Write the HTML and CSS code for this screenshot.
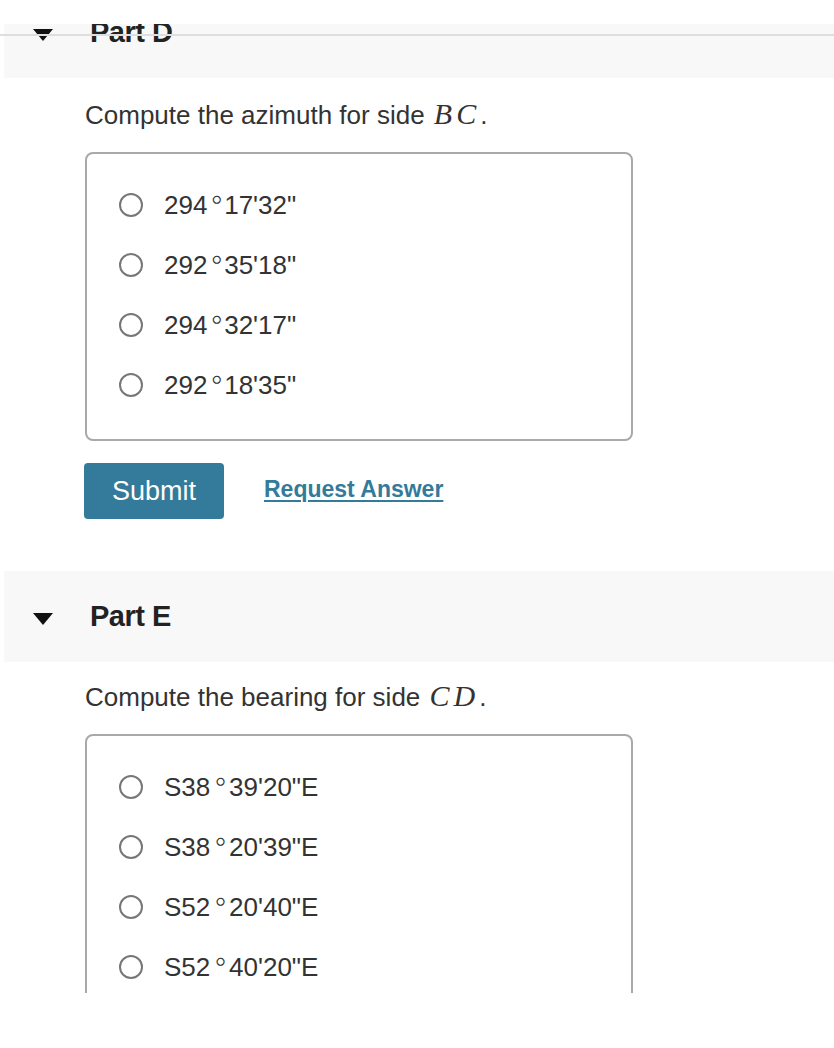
FILE: index.html
```html
<!DOCTYPE html>
<html lang="en">
<head>
    <meta charset="UTF-8">
    <meta name="viewport" content="width=device-width, initial-scale=1.0">
    <title>Parts D and E</title>
    <link rel="stylesheet" href="styles.css">
</head>
<body>
    <div class="top-rule"></div>
    <div class="viewport">
        <div class="content">
            <div class="part part-d">
                <div class="part-header">
                    <span class="arrow"></span>
                    <h3>Part D</h3>
                </div>
                <div class="part-body">
                    <p class="question">Compute the azimuth for side <span class="math">BC</span>.</p>
                    <div class="choices">
                        <label class="choice"><input type="radio" name="partD"><span>294<span class="deg">∘</span>17'32"</span></label>
                        <label class="choice"><input type="radio" name="partD"><span>292<span class="deg">∘</span>35'18"</span></label>
                        <label class="choice"><input type="radio" name="partD"><span>294<span class="deg">∘</span>32'17"</span></label>
                        <label class="choice"><input type="radio" name="partD"><span>292<span class="deg">∘</span>18'35"</span></label>
                    </div>
                    <div class="actions">
                        <button type="button" class="submit">Submit</button>
                        <a href="#" class="request">Request Answer</a>
                    </div>
                </div>
            </div>

            <div class="part part-e">
                <div class="part-header">
                    <span class="arrow"></span>
                    <h3>Part E</h3>
                </div>
                <div class="part-body">
                    <p class="question">Compute the bearing for side <span class="math">CD</span>.</p>
                    <div class="choices">
                        <label class="choice"><input type="radio" name="partE"><span>S38<span class="deg sp">∘</span>39'20"E</span></label>
                        <label class="choice"><input type="radio" name="partE"><span>S38<span class="deg sp">∘</span>20'39"E</span></label>
                        <label class="choice"><input type="radio" name="partE"><span>S52<span class="deg sp">∘</span>20'40"E</span></label>
                        <label class="choice"><input type="radio" name="partE"><span>S52<span class="deg sp">∘</span>40'20"E</span></label>
                    </div>
                </div>
            </div>
        </div>
    </div>
</body>
</html>
```

FILE: styles.css
```css
body {
    font-family: "Liberation Sans", Arial, sans-serif;
    margin: 0;
    background-color: #fff;
    color: #333;
}

.top-rule {
    position: absolute;
    top: 34px;
    left: 0;
    width: 100%;
    height: 2px;
    background-color: #dedede;
    z-index: 10;
}

.viewport {
    margin-top: 24px;
    height: 969px;
    overflow: hidden;
}

.content {
    margin-top: -37px;
}

.part-header {
    background-color: #f8f8f8;
    margin-left: 4px;
    height: 91px;
    display: flex;
    align-items: center;
    padding-left: 29px;
}

.arrow {
    width: 0;
    height: 0;
    border-left: 10px solid transparent;
    border-right: 10px solid transparent;
    border-top: 12px solid #111;
    margin-right: 37px;
    margin-top: 4px;
}

.part-header h3 {
    margin: 0;
    font-size: 29px;
    font-weight: bold;
    color: #222;
    letter-spacing: -0.5px;
}

.part-body {
    margin-left: 85px;
    width: 548px;
}

.question {
    margin: 18px 0 19px;
    font-size: 26px;
    line-height: 36px;
}

.part-e .question {
    margin-top: 16px;
}

.math {
    font-family: "Liberation Serif", "Times New Roman", serif;
    font-style: italic;
    font-size: 30px;
    letter-spacing: 4px;
    margin-left: 2px;
}

.choices {
    border: 2px solid #a9a9a9;
    border-radius: 8px;
    padding: 21px 0 24px 33px;
}

.choice {
    display: flex;
    align-items: center;
    height: 60px;
    font-size: 26px;
    color: #333;
}

.choice input {
    appearance: none;
    -webkit-appearance: none;
    width: 24px;
    height: 24px;
    margin: 0 21px 0 -1px;
    border: 2px solid #777;
    border-radius: 50%;
    background-color: #fff;
}

.deg {
    font-family: "DejaVu Sans", sans-serif;
    font-size: 30px;
    font-weight: 300;
    vertical-align: 5px;
    line-height: 0;
    margin: 0 -2px 0 0;
}

.deg.sp {
    margin: 0 -1px 0 1px;
}

.actions {
    display: flex;
    align-items: center;
    margin-top: 22px;
    margin-bottom: 52px;
}

.submit {
    width: 140px;
    height: 56px;
    margin-left: -1px;
    background-color: #347a9a;
    border: none;
    border-radius: 4px;
    color: #fff;
    font-family: "Liberation Sans", Arial, sans-serif;
    font-size: 27px;
    cursor: pointer;
}

.request {
    margin-left: 40px;
    margin-top: -4px;
    color: #347a9a;
    font-size: 23px;
    font-weight: bold;
    text-decoration: underline;
    text-decoration-thickness: 2px;
    text-underline-offset: 3px;
}
```
